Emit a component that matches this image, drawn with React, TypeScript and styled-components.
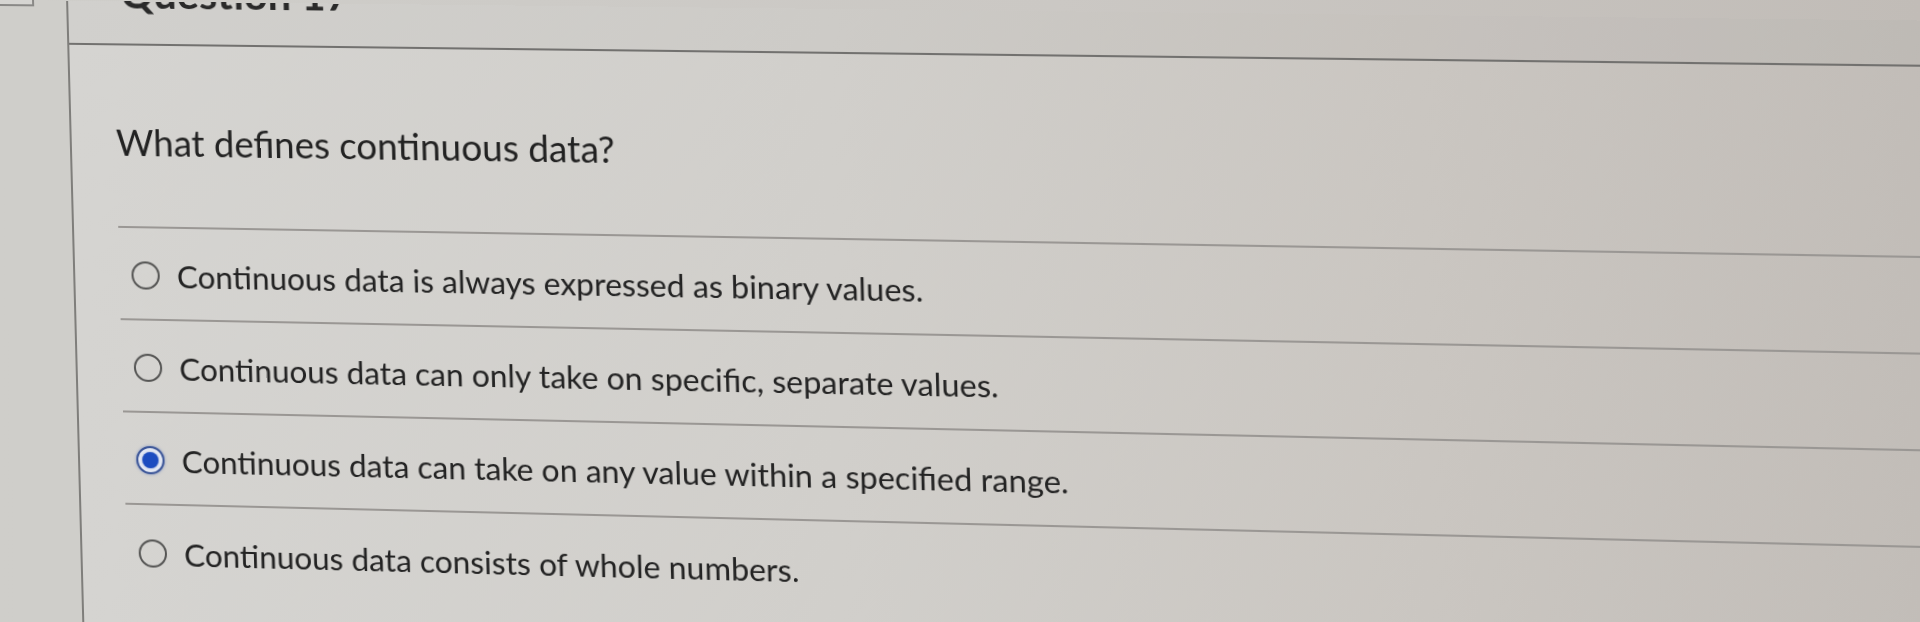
import React from "react";
import styled, { createGlobalStyle } from "styled-components";

const GlobalStyle = createGlobalStyle`
  html, body {
    margin: 0;
    padding: 0;
    overflow: hidden;
  }
  body {
    background: linear-gradient(90deg, #cfceca 0%, #cbc8c4 55%, #c1bcb7 100%);
    font-family: Lato, "Open Sans", sans-serif;
  }
`;

// whole quiz sheet, seen a little from the side
const Screen = styled.div`
  display: flex;
  width: 1920px;
  height: 660px;
  transform-origin: 0 0;
  transform: matrix3d(1, 0.0107, 0, -0.0000267, 0.026, 1, 0, 0, 0, 0, 1, 0, 0, 0, 0, 1);
`;

const Sidebar = styled.div`
  flex: 0 0 66px;
  background: #cfceca;
  border-right: 2px solid #7f7e7b;
`;

const FlagBox = styled.div`
  width: 32px;
  height: 4px;
  border: 2px solid #8a8987;
  border-top: none;
  border-left: none;
  background: #d6d5d2;
`;

const Panel = styled.div`
  flex: 1;
  display: flex;
  flex-direction: column;
  background: linear-gradient(90deg, #d5d4d1 0%, #d1cfcb 40%, #cac6c1 70%, #c0bbb6 100%);
`;

const Header = styled.div`
  height: 42px;
  overflow: hidden;
  padding-left: 52px;
  border-bottom: 2px solid #72716f;
  background: rgba(0, 0, 0, 0.015);
`;

const Title = styled.h2`
  margin: -29px 0 0;
  font-size: 41px;
  font-weight: 700;
  line-height: 1;
  color: #2a2a2a;
`;

const Body = styled.div`
  padding-left: 44px;
`;

const Prompt = styled.p`
  margin: 0;
  padding: 74px 0 62px;
  font-size: 36px;
  line-height: 44px;
  color: #222;
`;

const AnswerList = styled.div`
  border-top: 2px solid #9a9794;
`;

const Answer = styled.label`
  display: flex;
  align-items: center;
  height: 92px;
  padding-top: 4px;
  box-sizing: border-box;
  border-bottom: 2px solid #9a9794;
  &:last-child {
    border-bottom: none;
  }
`;

const Radio = styled.span<{ checked: boolean }>`
  flex: 0 0 auto;
  display: flex;
  align-items: center;
  justify-content: center;
  box-sizing: border-box;
  width: 28px;
  height: 28px;
  margin-left: 12px;
  border-radius: 50%;
  border: 2px solid ${({ checked }) => (checked ? "#3b5597" : "#555554")};
  background: ${({ checked }) => (checked ? "#e4e9f4" : "transparent")};
  box-shadow: ${({ checked }) => (checked ? "0 0 3px rgba(40, 80, 180, 0.5)" : "none")};
`;

const Dot = styled.span`
  width: 16px;
  height: 16px;
  border-radius: 50%;
  background: #1c4cc0;
  box-shadow: 0 0 2px rgba(20, 60, 170, 0.6);
`;

const AnswerText = styled.span`
  margin-left: 17px;
  font-size: 31px;
  color: #232323;
`;

const answers = [
  "Continuous data is always expressed as binary values.",
  "Continuous data can only take on specific, separate values.",
  "Continuous data can take on any value within a specified range.",
  "Continuous data consists of whole numbers.",
];

const App: React.FC = () => {
  const selected = 2;
  return (
    <>
      <GlobalStyle />
      <Screen>
        <Sidebar>
          <FlagBox />
        </Sidebar>
        <Panel>
          <Header>
            <Title>Question 17</Title>
          </Header>
          <Body>
            <Prompt>What defines continuous data?</Prompt>
            <AnswerList>
              {answers.map((text, i) => (
                <Answer key={text}>
                  <Radio checked={i === selected}>{i === selected && <Dot />}</Radio>
                  <AnswerText>{text}</AnswerText>
                </Answer>
              ))}
            </AnswerList>
          </Body>
        </Panel>
      </Screen>
    </>
  );
};

export default App;
